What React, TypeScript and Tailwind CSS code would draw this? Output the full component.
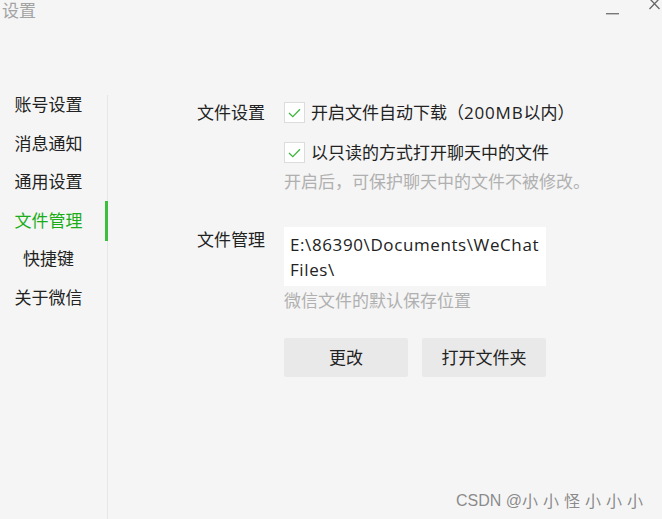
import React from 'react';

const FONT = { fontFamily: '"Open Sans", "Noto Sans CJK SC", sans-serif' };

const navItems = ['账号设置', '消息通知', '通用设置', '文件管理', '快捷键', '关于微信'];

const CheckBox = () => (
  <div className="flex h-[21px] w-[21px] items-center justify-center border border-[#dcdcdc] bg-white">
    <svg width="13" height="10" viewBox="0 0 13 10" fill="none">
      <path d="M1 5 L4.8 8.6 L12 1.2" stroke="#3cb53c" strokeWidth="1.3" />
    </svg>
  </div>
);

export default function App() {
  return (
    <div className="flex h-[519px] w-[662px] flex-col overflow-hidden bg-[#f5f5f5] text-[#222]" style={FONT}>
      {/* title bar */}
      <div className="flex h-[95px] shrink-0 items-start justify-between">
        <div className="pl-[2px] pt-[1px] text-[17px] leading-[20px] text-[#a3a3a3]">设置</div>
        <div className="flex items-start gap-[30px] pr-[2px]">
          <svg width="13" height="2" viewBox="0 0 13 2" className="mt-[13px]">
            <rect x="0" y="0" width="13" height="1.4" fill="#777" />
          </svg>
          <svg width="11" height="12" viewBox="0 0 11 12" className="-mt-[2px]">
            <path d="M0.5 0.5 L10.5 11 M10.5 0.5 L0.5 11" stroke="#666" strokeWidth="1.3" />
          </svg>
        </div>
      </div>

      <div className="flex flex-1">
        {/* sidebar */}
        <div className="flex w-[108px] shrink-0 flex-col gap-[18.6px] border-r border-[#e6e6e6]">
          {navItems.map((item) => {
            const active = item === '文件管理';
            return (
              <div key={item} className="relative h-[20px]">
                <div
                  className={`ml-[14px] w-[69px] whitespace-nowrap text-center text-[17px] leading-[20px] ${
                    active ? 'text-[#1aad19]' : 'text-[#222]'
                  }`}
                >
                  {item}
                </div>
                {active && <div className="absolute -top-[10px] -right-[1px] h-[40px] w-[3px] bg-[#3dbf3d]" />}
              </div>
            );
          })}
        </div>

        {/* content */}
        <div className="flex-1 pl-[89px] pt-[7px]">
          <div className="flex">
            <div className="w-[87px] shrink-0 text-[17px] leading-[21px]">文件设置</div>
            <div className="flex flex-col">
              <div className="flex items-center gap-[6px]">
                <CheckBox />
                <span className="whitespace-nowrap text-[17px] leading-[21px]">
                  开启文件自动下载（<span className="tracking-[0.8px]">200MB</span>以内）
                </span>
              </div>
              <div className="mt-[19px] flex items-center gap-[6px]">
                <CheckBox />
                <span className="whitespace-nowrap text-[17px] leading-[21px]">以只读的方式打开聊天中的文件</span>
              </div>
              <div className="mt-[9px] whitespace-nowrap text-[17px] leading-[20px] text-[#b0b0b0]">
                开启后，可保护聊天中的文件不被修改。
              </div>
            </div>
          </div>

          <div className="mt-[35px] flex">
            <div className="mt-[3px] w-[87px] shrink-0 text-[17px] leading-[20px]">文件管理</div>
            <div className="flex flex-col">
              <div className="h-[59px] w-[262px] bg-white px-[6px] pt-[5px] text-[17px] leading-[25px] tracking-[0.6px] text-[#222]">
                E:\86390\Documents\WeChat Files\
              </div>
              <div className="mt-[5px] text-[17px] leading-[20px] text-[#b0b0b0]">微信文件的默认保存位置</div>
              <div className="mt-[27px] flex gap-[14px]">
                <button className="h-[39px] w-[124px] rounded-[2px] bg-[#e9e9e9] text-[17px] text-[#222]">更改</button>
                <button className="h-[39px] w-[124px] rounded-[2px] bg-[#e9e9e9] text-[17px] text-[#222]">打开文件夹</button>
              </div>
            </div>
          </div>

          <div className="mt-[115px] flex justify-end pr-[14px] text-[16px] leading-[18px] text-[#8a8a8a] [text-shadow:0_0_1px_#fff]">
            <span style={{ fontFamily: '"Liberation Sans", sans-serif' }}>CSDN @</span>
            <span className="tracking-[5px]">小小怪小小小</span>
          </div>
        </div>
      </div>
    </div>
  );
}
